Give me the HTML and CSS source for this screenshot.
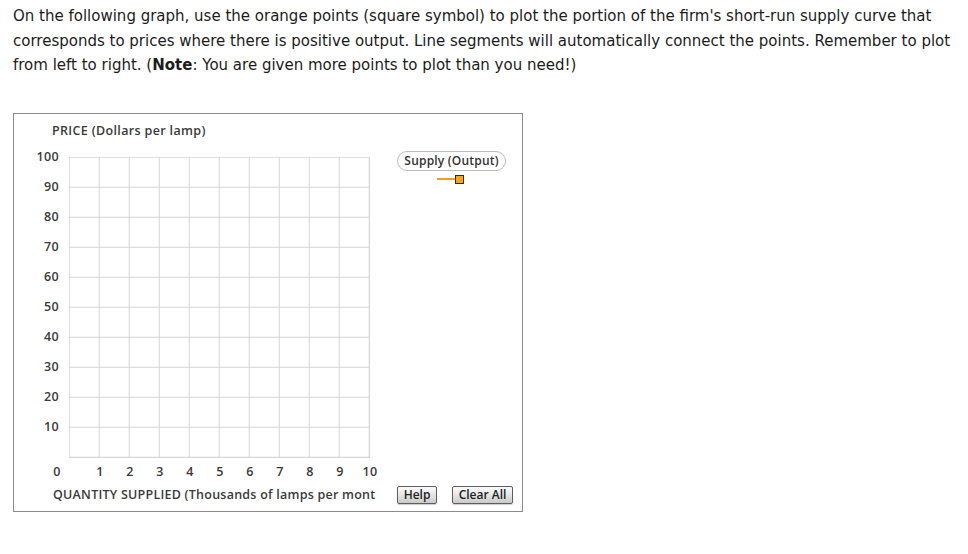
FILE: index.html
```html
<!DOCTYPE html>
<html>
<head>
<meta charset="utf-8">
<link rel="stylesheet" href="styles.css">
</head>
<body>
<p class="prompt">On the following graph, use the orange points (square symbol) to plot the portion of the firm's short-run supply curve that corresponds to prices where there is positive output. Line segments will automatically connect the points. Remember to plot from left to right. (<b>Note</b>: You are given more points to plot than you need!)</p>
<div class="graph">
  <div class="plot-col">
    <div class="y-title">PRICE (Dollars per lamp)</div>
    <div class="plot-row">
      <div class="y-labels">
        <span>100</span><span>90</span><span>80</span><span>70</span><span>60</span><span>50</span><span>40</span><span>30</span><span>20</span><span>10</span>
      </div>
      <div class="grid"></div>
    </div>
    <div class="x-labels">
      <span class="zero">0</span><span>1</span><span>2</span><span>3</span><span>4</span><span>5</span><span>6</span><span>7</span><span>8</span><span>9</span><span>10</span>
    </div>
    <div class="x-title">QUANTITY SUPPLIED (Thousands of lamps per month)</div>
  </div>
  <div class="side-col">
    <div class="legend">
      <div class="legend-pill">Supply (Output)</div>
      <div class="legend-mark"><span class="mark-line"></span><span class="mark-square"></span></div>
    </div>
    <div class="buttons">
      <button class="btn btn-help">Help</button>
      <button class="btn btn-clear">Clear All</button>
    </div>
  </div>
</div>
</body>
</html>
```
FILE: styles.css
```css
html, body {
  margin: 0;
  padding: 0;
  background: #fff;
}
.prompt {
  margin: 4px 0 0 0;
  padding: 0 13px;
  font-family: "DejaVu Sans", Verdana, sans-serif;
  font-size: 15px;
  line-height: 24.5px;
  color: #1c1c1c;
}
.prompt b {
  font-weight: bold;
}
.graph {
  box-sizing: border-box;
  margin: 35px 0 0 13px;
  width: 510px;
  height: 399px;
  border: 1px solid #8c8c8c;
  padding: 9px 0 0 20px;
  display: flex;
  font-family: "Open Sans", "Liberation Sans", sans-serif;
  font-size: 12.5px;
  font-weight: 600;
  letter-spacing: 0.35px;
  color: #3a3a3a;
}
.plot-col {
  width: 336px;
  flex: none;
  display: flex;
  flex-direction: column;
}
.y-title {
  margin-left: 18px;
  line-height: 16px;
  height: 16px;
  margin-bottom: 18px;
  white-space: nowrap;
}
.plot-row {
  display: flex;
  align-items: flex-start;
}
.y-labels {
  width: 26px;
  margin-top: -15px;
  margin-right: 10px;
  display: flex;
  flex-direction: column;
  align-items: flex-end;
}
.y-labels span {
  height: 30px;
  line-height: 30px;
}
.grid {
  box-sizing: border-box;
  flex: none;
  width: 301px;
  height: 301px;
  border-right: 1.5px solid #d6d6d6;
  border-bottom: 1.5px solid #d6d6d6;
  background-image:
    linear-gradient(to right, #d6d6d6 1.5px, transparent 1.5px),
    linear-gradient(to bottom, #d6d6d6 1.5px, transparent 1.5px);
  background-size: 30px 30px;
  background-position: -0.25px -0.25px;
}
.x-labels {
  display: flex;
  margin-left: 8px;
  margin-top: 6px;
  line-height: 16px;
  width: 360px;
}
.x-labels span {
  flex: none;
  width: 30px;
  text-align: center;
}
.x-labels .zero {
  margin-right: 13px;
}
.x-title {
  margin-left: 19px;
  margin-top: 7px;
  line-height: 16px;
  width: 323px;
  letter-spacing: 0.24px;
  white-space: nowrap;
  overflow: hidden;
}
.side-col {
  margin-left: 27px;
  padding-top: 28px;
  padding-bottom: 7px;
  display: flex;
  flex-direction: column;
  justify-content: space-between;
}
.legend {
  display: flex;
  flex-direction: column;
  align-items: flex-start;
}
.legend-pill {
  box-sizing: border-box;
  height: 20px;
  width: 109px;
  text-align: center;
  border: 1px solid #bdbdbd;
  border-radius: 10px;
  line-height: 18px;
  color: #333;
  font-size: 12px;
  letter-spacing: 0.2px;
  white-space: nowrap;
}
.legend-mark {
  display: flex;
  align-items: center;
  margin-left: 40px;
  margin-top: 4px;
}
.mark-line {
  width: 18px;
  height: 2px;
  background: #f5a117;
}
.mark-square {
  box-sizing: border-box;
  width: 9px;
  height: 9px;
  background: #f7a51e;
  border: 1.5px solid #3b2a05;
}
.buttons {
  display: flex;
  gap: 15px;
}
.btn {
  box-sizing: border-box;
  height: 18px;
  padding: 0;
  border: 1px solid #5e5e5e;
  border-radius: 2px;
  background: linear-gradient(to bottom, #fbfbfb 0%, #e6e6e6 50%, #c9c9c9 100%);
  font-family: "Open Sans", "Liberation Sans", sans-serif;
  font-size: 12px;
  font-weight: 600;
  letter-spacing: 0;
  color: #222;
  line-height: 16px;
  box-shadow: 0 1px 1px rgba(0,0,0,0.2);
  white-space: nowrap;
}
.btn-help {
  width: 40px;
}
.btn-clear {
  width: 61px;
}
```
